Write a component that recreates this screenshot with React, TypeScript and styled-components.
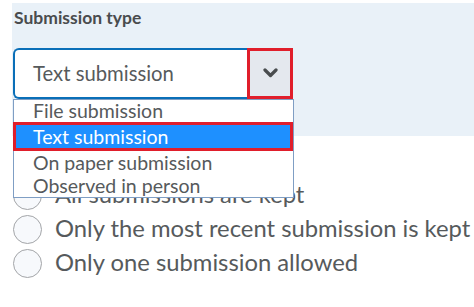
import React from "react";
import styled, { createGlobalStyle } from "styled-components";

const GlobalStyle = createGlobalStyle`
  html, body { margin: 0; padding: 0; background: #ffffff; }
  body { font-family: Lato, "Open Sans", Arial, sans-serif; }
  * { box-sizing: border-box; }
`;

const Page = styled.div`
  width: 474px;
  height: 307px;
  padding-top: 3px;
  overflow: hidden;
  position: relative;
`;

const Panel = styled.div`
  margin-left: 12px;
  height: 133px;
  background: #e9f1f8;
  padding: 6px 0 0 1px;
`;

const Label = styled.div`
  font-weight: 700;
  font-size: 17.5px;
  line-height: 18px;
  color: #494c4e;
  padding-left: 1px;
  height: 18px;
`;

const SelectWrap = styled.div`
  position: relative;
  margin-top: 21px;
  width: 280px;
  height: 51px;
  display: flex;
  z-index: 2;
`;

const Field = styled.div`
  flex: 1;
  display: flex;
  align-items: center;
  background: #ffffff;
  border: 2px solid #0a6fb8;
  border-right: none;
  border-radius: 6px 0 0 6px;
  padding-left: 18px;
  padding-bottom: 2px;
  font-size: 20.3px;
  color: #565a5c;
`;

const Toggle = styled.div`
  width: 46px;
  height: 51px;
  display: flex;
  align-items: center;
  justify-content: center;
  background: #e4e8ee;
  border: 3px solid #e01e2b;
  padding-bottom: 2px;
`;

const List = styled.div`
  position: absolute;
  top: 100%;
  left: 0;
  width: 281px;
  background: #ffffff;
  border: 1px solid #7f9ec4;
  display: flex;
  flex-direction: column;
`;

const Option = styled.div<{ $selected?: boolean; $h: number }>`
  height: ${(p) => p.$h}px;
  display: flex;
  align-items: center;
  font-size: 19.5px;
  line-height: 1;
  color: ${(p) => (p.$selected ? "#ffffff" : "#565a5c")};
  background: ${(p) => (p.$selected ? "#1e90ff" : "#ffffff")};
  border: ${(p) => (p.$selected ? "3px solid #e01e2b" : "none")};
  margin-left: ${(p) => (p.$selected ? "-1px" : "0")};
  padding-left: ${(p) => (p.$selected ? "17px" : "19px")};
  white-space: nowrap;
`;

const RadioGroup = styled.div`
  margin-top: 42px;
  display: flex;
  flex-direction: column;
`;

const RadioRow = styled.div`
  height: 34px;
  display: flex;
  align-items: center;
  padding-left: 13px;
  gap: 13px;
`;

const Circle = styled.span`
  width: 29px;
  height: 29px;
  border-radius: 50%;
  border: 1.5px solid #a3a5a8;
  background: #f7f9fc;
  flex: none;
`;

const RadioText = styled.span`
  font-size: 23.8px;
  line-height: 1;
  color: #565a5c;
  white-space: nowrap;
`;

const options = [
  { label: "File submission", h: 22 },
  { label: "Text submission", h: 29, selected: true },
  { label: "On paper submission", h: 23 },
  { label: "Observed in person", h: 23 },
];

const radios = [
  "All submissions are kept",
  "Only the most recent submission is kept",
  "Only one submission allowed",
];

export default function App() {
  return (
    <>
      <GlobalStyle />
      <Page>
        <Panel>
          <Label>Submission type</Label>
          <SelectWrap>
            <Field>Text submission</Field>
            <Toggle>
              <svg width="15" height="10" viewBox="0 0 15 10">
                <polyline
                  points="2,2 7.5,7.5 13,2"
                  fill="none"
                  stroke="#494c4e"
                  strokeWidth="3.2"
                  strokeLinecap="round"
                  strokeLinejoin="round"
                />
              </svg>
            </Toggle>
            <List>
              {options.map((o) => (
                <Option key={o.label} $selected={o.selected} $h={o.h}>
                  {o.label}
                </Option>
              ))}
            </List>
          </SelectWrap>
        </Panel>
        <RadioGroup>
          {radios.map((r) => (
            <RadioRow key={r}>
              <Circle />
              <RadioText>{r}</RadioText>
            </RadioRow>
          ))}
        </RadioGroup>
      </Page>
    </>
  );
}
